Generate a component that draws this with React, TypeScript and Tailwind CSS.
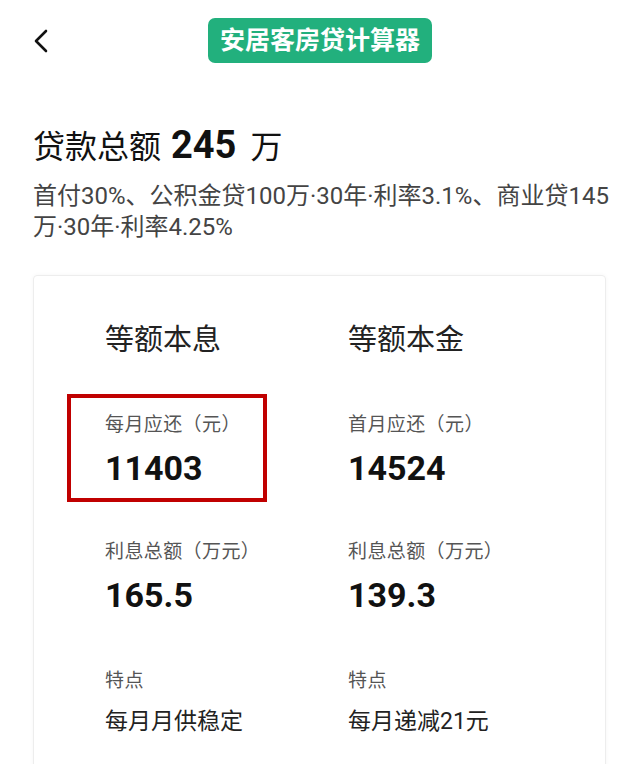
const font = "font-['Roboto','Noto_Sans_CJK_SC',sans-serif]";

type Cell = { label: string; value: string; big?: boolean };

const rows: [Cell, Cell][] = [
  [
    { label: "每月应还（元）", value: "11403", big: true },
    { label: "首月应还（元）", value: "14524", big: true },
  ],
  [
    { label: "利息总额（万元）", value: "165.5", big: true },
    { label: "利息总额（万元）", value: "139.3", big: true },
  ],
  [
    { label: "特点", value: "每月月供稳定" },
    { label: "特点", value: "每月递减21元" },
  ],
];

function Stat({ cell, marked }: { cell: Cell; marked?: boolean }) {
  return (
    <div className="relative flex flex-col">
      {marked && (
        <div className="absolute -left-[38px] -top-[18px] h-[108px] w-[200px] border-4 border-[#c00000]" />
      )}
      <div className="text-[19px] leading-[25px] tracking-[0.4px] text-[#555]">{cell.label}</div>
      {cell.big ? (
        <div className="mt-[11px] text-[34px] font-bold leading-[40px] text-[#111]">{cell.value}</div>
      ) : (
        <div className="mt-[14px] text-[23px] leading-[30px] text-[#222]">{cell.value}</div>
      )}
    </div>
  );
}

export default function App() {
  return (
    <div className={`${font} min-h-[764px] bg-white`}>
      {/* Top bar */}
      <div className="grid grid-cols-[1fr_auto_1fr] items-center pt-[18px]">
        <div className="pl-[32px]">
          <svg width="18" height="24" viewBox="0 0 18 24" fill="none">
            <path d="M14 2 L4 12 L14 22" stroke="#111" strokeWidth="2.6" strokeLinecap="round" strokeLinejoin="round" />
          </svg>
        </div>
        <div className="rounded-[7px] bg-[#22b07d] px-[12px] text-[25px] font-bold leading-[45px] text-white">
          安居客房贷计算器
        </div>
        <div />
      </div>

      {/* Loan summary */}
      <div className="pl-[33px] pr-[20px] pt-[60px]">
        <div className="flex items-baseline text-[32px] leading-[44px] text-[#111]">
          <span>贷款总额</span>
          <span className="ml-[10px] text-[38px] font-bold">245</span>
          <span className="ml-[14px]">万</span>
        </div>
        <p className="mt-[12px] text-[24px] leading-[31px] text-[#444]">
          首付30%、公积金贷100万·30年·利率3.1%、商业贷145
          <br />
          万·30年·利率4.25%
        </p>
      </div>

      {/* Repayment comparison */}
      <div className="ml-[33px] mr-[34px] mt-[32px] rounded-[4px] border border-[#ededed] pb-[40px] pl-[71px] pt-[46px] shadow-[0_0_4px_rgba(0,0,0,0.04)]">
        <div className="grid grid-cols-[243px_1fr] text-[29px] leading-[36px] text-[#222]">
          <div>等额本息</div>
          <div>等额本金</div>
        </div>
        {rows.map((row, i) => (
          <div
            key={i}
            className={`grid grid-cols-[243px_1fr] ${i === 0 ? "mt-[54px]" : i === 1 ? "mt-[51px]" : "mt-[53px]"}`}
          >
            <Stat cell={row[0]} marked={i === 0} />
            <Stat cell={row[1]} />
          </div>
        ))}
      </div>
    </div>
  );
}
